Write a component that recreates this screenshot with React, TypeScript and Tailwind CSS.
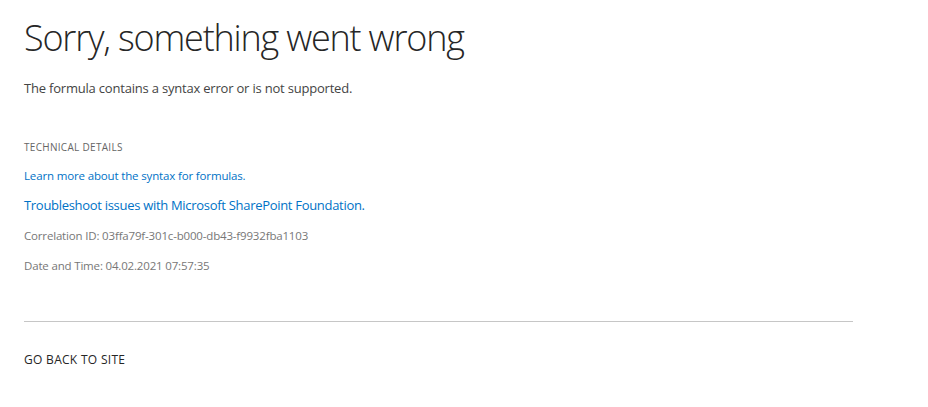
import React from 'react';

const App = (): React.ReactElement => {
  return (
    <div className="min-h-[407px] bg-white pl-6 pt-[15px] font-['Open_Sans',sans-serif]">
      <h1 className="text-[36px] leading-[46px] font-light text-[#262626] tracking-[-1.2px]">
        Sorry, something went wrong
      </h1>
      <p className="mt-[18px] text-[13px] leading-[18px] text-[#444] tracking-[-0.2px]">
        The formula contains a syntax error or is not supported.
      </p>
      <div className="mt-[43px] text-[10px] leading-[14px] uppercase text-[#666] tracking-[0.3px]">
        Technical Details
      </div>
      <div className="mt-[14px] text-[11.5px] leading-[16px] text-[#0072c6] tracking-[-0.15px]">
        <a href="#">Learn more about the syntax for formulas.</a>
      </div>
      <div className="mt-[13px] text-[13px] leading-[16px] text-[#0072c6] tracking-[-0.3px]">
        <a href="#">Troubleshoot issues with Microsoft SharePoint Foundation.</a>
      </div>
      <div className="mt-[15px] text-[11.5px] leading-[16px] text-[#777] tracking-[-0.17px]">
        Correlation ID: 03ffa79f-301c-b000-db43-f9932fba1103
      </div>
      <div className="mt-[14px] text-[11.5px] leading-[16px] text-[#777] tracking-[-0.17px]">
        Date and Time: 04.02.2021 07:57:35
      </div>
      <hr className="mt-[47px] w-[829px] border-t border-[#c6c6c6]" />
      <div className="mt-[30px] text-[12px] leading-[16px] uppercase text-[#262626] tracking-[0.3px]">
        <a href="#">Go back to site</a>
      </div>
    </div>
  );
};

export default App;
